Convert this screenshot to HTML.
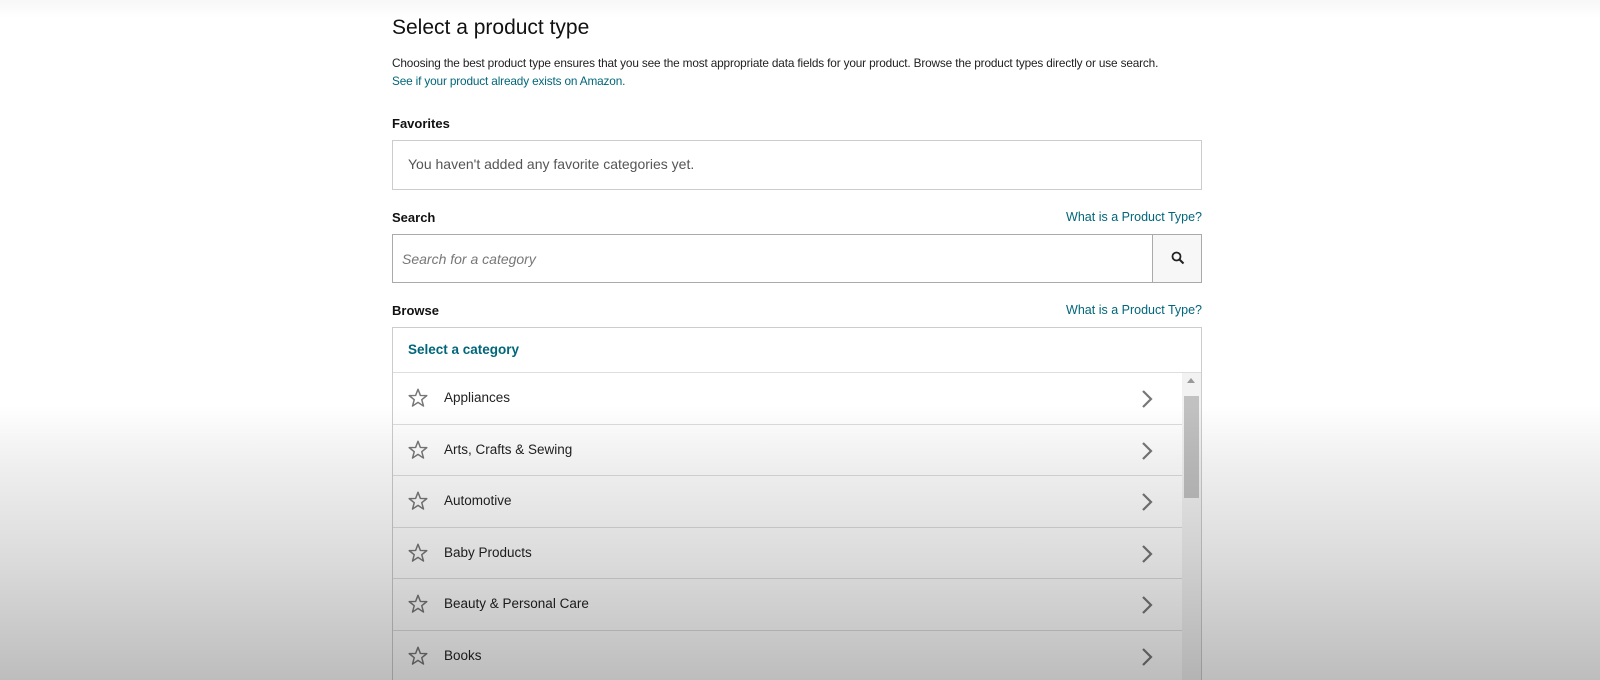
<!DOCTYPE html>
<html style="width:1600px;height:680px;overflow:hidden"><head><meta charset="utf-8"><style>
*{margin:0;padding:0;box-sizing:border-box}
body{width:1600px;height:680px;overflow:hidden;background:#fff;font-family:"Liberation Sans",sans-serif;color:#111;position:relative}
.ov{position:absolute;left:0;top:0;width:1600px;height:680px;pointer-events:none;background:linear-gradient(to bottom,rgba(0,0,0,0.03) 0,rgba(0,0,0,0) 18px,rgba(0,0,0,0) 405px,rgba(0,0,0,0.06) 460px,rgba(0,0,0,0.14) 560px,rgba(0,0,0,0.26) 680px);z-index:10}
.a{position:absolute}
h1{position:absolute;left:392px;top:16px;font-size:21px;font-weight:normal;color:#111}
.desc{left:392px;top:54px;font-size:11.8px;line-height:18px;color:#222;letter-spacing:-0.15px}
.link{color:#00667a}
.lbl{font-size:13px;font-weight:bold;color:#111}
.box{border:1px solid #ccc;background:#fff}
.row{position:absolute;left:393px;width:789px;height:51.6px;border-bottom:1px solid #ddd;background:#fff}
.row span{position:absolute;left:51px;top:17px;font-size:13.5px;color:#222}
.row svg.s{position:absolute;left:14px;top:14px}
.row svg.c{position:absolute;left:748px;top:16px}
</style></head><body>
<h1>Select a product type</h1>
<div class="a desc">Choosing the best product type ensures that you see the most appropriate data fields for your product. Browse the product types directly or use search.<br><span class="link">See if your product already exists on Amazon.</span></div>
<div class="a lbl" style="left:392px;top:116px">Favorites</div>
<div class="a box" style="left:392px;top:140px;width:810px;height:50px"><span style="position:absolute;left:15px;top:15px;font-size:14px;color:#555">You haven't added any favorite categories yet.</span></div>
<div class="a lbl" style="left:392px;top:210px">Search</div>
<div class="a link" style="right:398px;top:210px;font-size:12.5px">What is a Product Type?</div>
<div class="a box" style="left:392px;top:234px;width:810px;height:49px;border-color:#aaa">
<span style="position:absolute;left:9px;top:16px;font-size:14px;font-style:italic;color:#777">Search for a category</span>
<div style="position:absolute;left:759px;top:0;width:49px;height:47px;border-left:1px solid #aaa;background:#f7f7f7">
<svg style="position:absolute;left:18px;top:16px" width="14" height="14" viewBox="0 0 14 14"><circle cx="5.5" cy="5.5" r="4" fill="none" stroke="#222" stroke-width="1.8"/><path d="M8.5 8.5 L12.5 12.5" stroke="#222" stroke-width="2"/></svg></div></div>
<div class="a lbl" style="left:392px;top:303px">Browse</div>
<div class="a link" style="right:398px;top:303px;font-size:12.5px">What is a Product Type?</div>
<div class="a box" style="left:392px;top:327px;width:810px;height:360px;overflow:hidden">
<div style="position:absolute;left:0;top:0;width:808px;height:45px;border-bottom:1px solid #ddd"><span style="position:absolute;left:15px;top:14px;font-size:13.5px;font-weight:bold;color:#00667a">Select a category</span></div>
<div style="position:absolute;left:789px;top:45px;width:19px;height:320px;background:#f2f2f2"><div style="position:absolute;left:5px;top:5px;width:0;height:0;border-left:4px solid transparent;border-right:4px solid transparent;border-bottom:5px solid #999"></div><div style="position:absolute;left:2px;top:23px;width:15px;height:102px;background:#c1c1c1"></div></div>
</div>
<div id="rows"></div>
<script>
var n=["Appliances","Arts, Crafts &amp; Sewing","Automotive","Baby Products","Beauty &amp; Personal Care","Books"];
var h="";
for(var i=0;i<n.length;i++){h+='<div class="row" style="top:'+(373+i*51.6)+'px"><svg class="s" width="22" height="22" viewBox="0 0 24 24"><path d="M12 2.5 L14.6 9.2 L21.6 9.4 L16.1 13.8 L18 20.8 L12 16.8 L6 20.8 L7.9 13.8 L2.4 9.4 L9.4 9.2 Z" fill="none" stroke="#777" stroke-width="1.6" stroke-linejoin="round"/></svg><span>'+n[i]+'</span><svg class="c" width="12" height="20" viewBox="0 0 12 20"><path d="M2 2 L10 10 L2 18" fill="none" stroke="#777" stroke-width="2.2"/></svg></div>';}
document.getElementById("rows").innerHTML=h;
</script>
<div class="ov"></div>
</body></html>
